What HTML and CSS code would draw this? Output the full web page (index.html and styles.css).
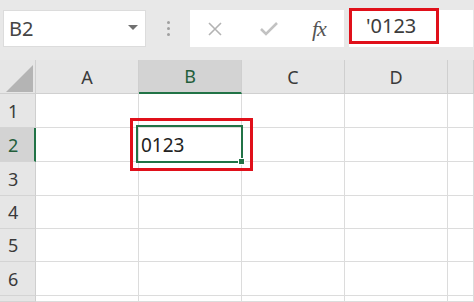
FILE: index.html
```html
<!DOCTYPE html>
<html lang="ja">
<head>
  <meta charset="UTF-8" />
  <title>Excel</title>
  <link rel="stylesheet" href="styles.css">
</head>
<body>
  <div class="toolbar">
    <div class="name-box">
      <span>B2</span>
      <span class="caret"></span>
    </div>
    <div class="dots"><i></i><i></i><i></i></div>
    <div class="actions">
      <svg class="ico" width="16" height="16" viewBox="0 0 16 16"><path d="M2 2 L14 14 M14 2 L2 14" stroke="#b3b3b3" stroke-width="1.6" fill="none"/></svg>
      <svg class="ico" width="20" height="16" viewBox="0 0 20 16"><path d="M2 8 L7 13 L18 2" stroke="#c2c2c2" stroke-width="2.6" fill="none"/></svg>
      <span class="fx">fx</span>
    </div>
    <div class="formula">
      <div class="formula-mark">'0123</div>
    </div>
  </div>

  <div class="sheet">
    <div class="corner"><span class="tri"></span></div>
    <div class="col-head">A</div>
    <div class="col-head sel">B</div>
    <div class="col-head">C</div>
    <div class="col-head">D</div>
    <div class="col-head"></div>

    <div class="row-head">1</div>
    <div class="cell"></div><div class="cell"></div><div class="cell"></div><div class="cell"></div><div class="cell"></div>

    <div class="row-head sel">2</div>
    <div class="cell"></div>
    <div class="cell active">
      0123
      <span class="cursor"><span class="handle"></span></span>
      <span class="mark"></span>
    </div>
    <div class="cell"></div><div class="cell"></div><div class="cell"></div>

    <div class="row-head">3</div>
    <div class="cell"></div><div class="cell"></div><div class="cell"></div><div class="cell"></div><div class="cell"></div>

    <div class="row-head">4</div>
    <div class="cell"></div><div class="cell"></div><div class="cell"></div><div class="cell"></div><div class="cell"></div>

    <div class="row-head">5</div>
    <div class="cell"></div><div class="cell"></div><div class="cell"></div><div class="cell"></div><div class="cell"></div>

    <div class="row-head">6</div>
    <div class="cell"></div><div class="cell"></div><div class="cell"></div><div class="cell"></div><div class="cell"></div>

    <div class="row-head"></div>
    <div class="cell"></div><div class="cell"></div><div class="cell"></div><div class="cell"></div><div class="cell"></div>
  </div>
</body>
</html>
```

FILE: styles.css
```css
* {
  margin: 0;
  padding: 0;
  box-sizing: border-box;
}

body {
  width: 474px;
  height: 302px;
  overflow: hidden;
  background: #e8e8e8;
  font-family: "Noto Sans", "Noto Sans CJK JP", sans-serif;
  color: #333;
}

.toolbar {
  height: 60px;
  display: flex;
  align-items: flex-start;
  padding-top: 10px;
  padding-left: 3px;
}

.name-box {
  width: 143px;
  height: 37px;
  background: #fff;
  border: 1px solid #dcdcdc;
  display: flex;
  align-items: center;
  justify-content: space-between;
  padding: 0 7px 0 5px;
  font-size: 20px;
  color: #444;
}

.caret {
  width: 0;
  height: 0;
  border-left: 5px solid transparent;
  border-right: 5px solid transparent;
  border-top: 5px solid #707070;
  margin-bottom: 3px;
}

.dots {
  width: 44px;
  height: 37px;
  display: flex;
  flex-direction: column;
  align-items: center;
  justify-content: center;
  gap: 3px;
}

.dots i {
  width: 3px;
  height: 3px;
  background: #a0a0a0;
  border-radius: 50%;
}

.actions {
  width: 154px;
  height: 37px;
  background: #fff;
  display: flex;
  align-items: center;
  padding-left: 17px;
}

.actions .ico:nth-child(2) {
  margin-left: 36px;
}

.fx {
  margin-left: 33px;
  font-family: "Liberation Serif", serif;
  font-style: italic;
  font-size: 22px;
  color: #555;
  letter-spacing: -1px;
}

.formula {
  margin-left: 5px;
  width: 124px;
  height: 37px;
  background: #fff;
  position: relative;
}

.formula-mark {
  position: absolute;
  left: 0;
  top: -2px;
  width: 90px;
  height: 36px;
  border: 3px solid #e0101a;
  font-size: 20px;
  color: #3c3c3c;
  padding-left: 14px;
  line-height: 29px;
}

.sheet {
  display: grid;
  grid-template-columns: 36px 103px 103px 103px 103px 1fr;
  grid-template-rows: 34px 34px 34px 34px 33px 33px 34px 1fr;
  background: #fff;
  height: 242px;
}

.corner {
  background: #e6e6e6;
  border-right: 1px solid #d0d0d0;
  border-bottom: 1px solid #d0d0d0;
  position: relative;
}

.tri {
  position: absolute;
  left: 6px;
  bottom: 1px;
  width: 27px;
  height: 27px;
  background: #b4b4b4;
  clip-path: polygon(100% 0, 100% 100%, 0 100%);
}

.col-head {
  background: #e6e6e6;
  border-right: 1px solid #cfcfcf;
  border-bottom: 1px solid #d0d0d0;
  display: flex;
  align-items: center;
  justify-content: center;
  font-size: 18px;
  color: #3a3a3a;
}

.col-head.sel {
  background: #d3d3d3;
  color: #235e3b;
  border-bottom: 2px solid #217346;
}

.row-head {
  background: #e6e6e6;
  border-right: 1px solid #cfcfcf;
  border-bottom: 1px solid #d4d4d4;
  display: flex;
  align-items: center;
  padding-left: 8px;
  font-size: 18px;
  color: #3a3a3a;
}

.row-head.sel {
  background: #d3d3d3;
  color: #235e3b;
  border-right: 2px solid #217346;
}

.cell {
  border-right: 1px solid #dcdcdc;
  border-bottom: 1px solid #dcdcdc;
  font-size: 19px;
  color: #222;
  display: flex;
  align-items: center;
  padding-left: 2px;
}

.cell.active {
  position: relative;
}

.cursor {
  position: absolute;
  left: -3px;
  top: -3px;
  right: -2px;
  bottom: -2px;
  border: 2px solid #217346;
}

.handle {
  position: absolute;
  right: -4px;
  bottom: -4px;
  width: 7px;
  height: 7px;
  background: #217346;
  border: 1px solid #fff;
}

.mark {
  position: absolute;
  left: -9px;
  top: -10px;
  width: 123px;
  height: 53px;
  border: 3px solid #e0101a;
}
```
